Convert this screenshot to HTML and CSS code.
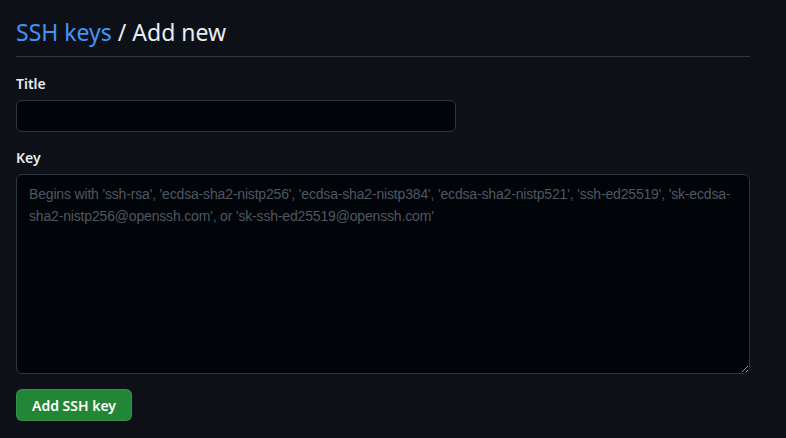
FILE: index.html
```html
<!DOCTYPE html>
<html lang="en">
<head>
<meta charset="utf-8">
<title>SSH keys / Add new</title>
<link rel="stylesheet" href="styles.css">
</head>
<body>
<main class="page">
  <div class="subhead">
    <h2 class="subhead-heading"><a class="crumb-link" href="#">SSH keys</a> / Add new</h2>
  </div>
  <form class="ssh-form">
    <div class="form-group">
      <label class="form-label" for="title">Title</label>
      <input class="form-input title-input" id="title" type="text">
    </div>
    <div class="form-group">
      <label class="form-label" for="key">Key</label>
      <textarea class="form-input key-input" id="key" placeholder="Begins with 'ssh-rsa', 'ecdsa-sha2-nistp256', 'ecdsa-sha2-nistp384', 'ecdsa-sha2-nistp521', 'ssh-ed25519', 'sk-ecdsa-sha2-nistp256@openssh.com', or 'sk-ssh-ed25519@openssh.com'"></textarea>
    </div>
    <button class="btn-primary" type="button">Add SSH key</button>
  </form>
</main>
</body>
</html>
```
FILE: styles.css
```css
html, body {
  margin: 0;
  padding: 0;
  background: #0d1117;
  color: #e6edf3;
  font-family: "Noto Sans", "Open Sans", sans-serif;
  font-size: 14px;
}

.page {
  width: 734px;
  padding: 16px;
}

.subhead {
  border-bottom: 1px solid #30363d;
  padding-bottom: 8px;
  margin-bottom: 16px;
}

.subhead-heading {
  margin: 0;
  font-size: 23px;
  font-weight: 400;
  line-height: 32px;
  color: #e6edf3;
}

.crumb-link {
  color: #4493f8;
  text-decoration: none;
}

.ssh-form {
  display: flex;
  flex-direction: column;
}

.form-group {
  display: flex;
  flex-direction: column;
  margin-bottom: 15px;
}

.form-label {
  font-weight: 600;
  font-size: 14px;
  line-height: 21px;
  margin-bottom: 6px;
  color: #e6edf3;
}

.form-input {
  box-sizing: border-box;
  background: #010409;
  border: 1px solid #30363d;
  border-radius: 6px;
  color: #e6edf3;
  font-family: inherit;
  font-size: 14px;
  line-height: 21px;
  padding: 5px 12px;
  outline: none;
}

.title-input {
  width: 440px;
  height: 32px;
}

.key-input {
  width: 734px;
  height: 200px;
  padding: 8px 12px;
  resize: vertical;
  font-family: "Liberation Sans", Arial, sans-serif;
  line-height: 22px;
  letter-spacing: -0.17px;
}

.key-input::placeholder {
  color: #505861;
  opacity: 1;
}

.btn-primary {
  align-self: flex-start;
  height: 32px;
  padding: 0 15px;
  background: #238636;
  color: #ffffff;
  border: 1px solid rgba(240, 246, 252, 0.1);
  border-radius: 6px;
  font-family: inherit;
  font-size: 14px;
  font-weight: 600;
  cursor: pointer;
}
```
